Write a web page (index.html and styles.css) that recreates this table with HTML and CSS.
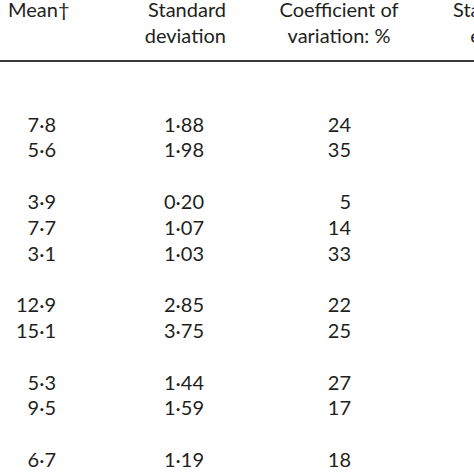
FILE: index.html
```html
<!DOCTYPE html>
<html>
<head>
<meta charset="utf-8">
<link rel="stylesheet" href="styles.css">
</head>
<body>
<div class="table">
  <div class="head">
    <div class="row">
      <div class="c a h"><span class="l1">Mean†</span></div>
      <div class="c b h"><span class="l1">Standard</span><span class="l2">deviation</span></div>
      <div class="c cc h"><span class="l1">Coefficient of</span><span class="l2">variation: %</span></div>
      <div class="c d h"><span class="l1">Standard</span><span class="l2">error</span></div>
    </div>
  </div>
  <div class="body">
    <div class="row blank"></div>
    <div class="row"><div class="c a">7·8</div><div class="c b">1·88</div><div class="c cc">24</div><div class="c d"></div></div>
    <div class="row"><div class="c a">5·6</div><div class="c b">1·98</div><div class="c cc">35</div><div class="c d"></div></div>
    <div class="row blank"></div>
    <div class="row"><div class="c a">3·9</div><div class="c b">0·20</div><div class="c cc">5</div><div class="c d"></div></div>
    <div class="row"><div class="c a">7·7</div><div class="c b">1·07</div><div class="c cc">14</div><div class="c d"></div></div>
    <div class="row"><div class="c a">3·1</div><div class="c b">1·03</div><div class="c cc">33</div><div class="c d"></div></div>
    <div class="row blank"></div>
    <div class="row"><div class="c a">12·9</div><div class="c b">2·85</div><div class="c cc">22</div><div class="c d"></div></div>
    <div class="row"><div class="c a">15·1</div><div class="c b">3·75</div><div class="c cc">25</div><div class="c d"></div></div>
    <div class="row blank"></div>
    <div class="row"><div class="c a">5·3</div><div class="c b">1·44</div><div class="c cc">27</div><div class="c d"></div></div>
    <div class="row"><div class="c a">9·5</div><div class="c b">1·59</div><div class="c cc">17</div><div class="c d"></div></div>
    <div class="row blank"></div>
    <div class="row"><div class="c a">6·7</div><div class="c b">1·19</div><div class="c cc">18</div><div class="c d"></div></div>
  </div>
</div>
</body>
</html>
```
FILE: styles.css
```css
html, body {
  margin: 0;
  padding: 0;
  background: #ffffff;
  overflow: hidden;
}
body {
  width: 474px;
  height: 474px;
}
.table {
  font-family: "Lato", "Open Sans", sans-serif;
  font-size: 20px;
  line-height: 25.8px;
  color: #231f20;
  width: 546px;
}
.head {
  padding-bottom: 16px;
  border-bottom: 2px solid #3a3a3a;
}
.l1, .l2 {
  display: block;
  line-height: 18px;
}
.l2 {
  margin-top: 7.8px;
}
.row {
  display: grid;
  grid-template-columns: 100px 140px 198px 108px;
}
.blank {
  height: 25.8px;
}
.body {
  padding-top: 24px;
}
.c {
  white-space: nowrap;
  text-align: right;
}
.a { padding-right: 44px; }
.b { padding-right: 36px; }
.cc { padding-right: 87px; }
.h.a { text-align: left; padding-left: 8px; padding-right: 0; }
.h.b { text-align: right; padding-right: 14px; }
.h.cc { text-align: center; padding-right: 0; }
.h.d { text-align: center; }
```
